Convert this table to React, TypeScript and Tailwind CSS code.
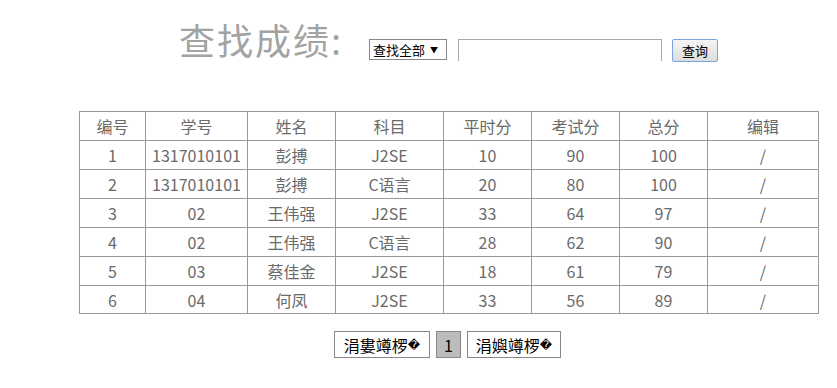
import React from "react";

const rows = [
  ["1", "1317010101", "彭搏", "J2SE", "10", "90", "100"],
  ["2", "1317010101", "彭搏", "C语言", "20", "80", "100"],
  ["3", "02", "王伟强", "J2SE", "33", "64", "97"],
  ["4", "02", "王伟强", "C语言", "28", "62", "90"],
  ["5", "03", "蔡佳金", "J2SE", "18", "61", "79"],
  ["6", "04", "何凤", "J2SE", "33", "56", "89"],
];

const widths = [66, 102, 88, 108, 88, 88, 88, 111];
const heads = ["编号", "学号", "姓名", "科目", "平时分", "考试分", "总分", "编辑"];

export default function App() {
  const font = { fontFamily: '"Noto Sans CJK SC", "Noto Sans", sans-serif' };
  return (
    <div className="w-[837px] h-[388px] bg-white overflow-hidden" style={font}>
      <div className="flex items-start pl-[179px] pt-[17px] h-[111px]">
        <div className="text-[36px] leading-[44px] text-[#a3a3a3] tracking-[2px]">查找成绩:</div>
        <div className="ml-[26px] mt-[22px] h-[21px] w-[78px] border border-[#888] flex items-center pl-[3px] text-[13px] text-black bg-white">
          <span className="leading-none">查找全部</span>
          <span className="ml-[5px] text-[8px] leading-none">▼</span>
        </div>
        <div className="ml-[11px] mt-[22px] h-[22px] w-[204px] border border-b-0 border-[#a9a9a9]" />
        <div className="ml-[10px] mt-[22px] h-[23px] w-[46px] border border-[#7aa3e0] rounded-[2px] bg-gradient-to-b from-[#f5f5f5] to-[#dcdcdc] flex items-center justify-center text-[13px] text-black">
          查询
        </div>
      </div>
      <table className="ml-[79px] border-collapse text-[16px] text-[#6a6a6a]">
        <thead>
          <tr className="h-[29px]">
            {heads.map((h, i) => (
              <th key={i} style={{ width: widths[i] }} className="border border-[#999] font-normal p-0 leading-none text-center">
                {h}
              </th>
            ))}
          </tr>
        </thead>
        <tbody>
          {rows.map((r, ri) => (
            <tr key={ri} className={ri === rows.length - 1 ? "h-[28px]" : "h-[29px]"}>
              {r.map((c, ci) => (
                <td key={ci} className="border border-[#999] p-0 leading-none text-center">
                  {c}
                </td>
              ))}
              <td className="border border-[#999] p-0 leading-none text-center">/</td>
            </tr>
          ))}
        </tbody>
      </table>
      <div className="flex ml-[334px] mt-[17px] gap-[6px] text-[16px] text-black">
        <div className="h-[27px] w-[96px] border border-[#888] flex items-center justify-center leading-none">
          涓婁竴椤<span style={{ fontFamily: '"DejaVu Sans", sans-serif' }} className="text-[12px]">�</span>
        </div>
        <div className="h-[27px] w-[25px] border border-[#888] bg-[#bcbcbc] flex items-center justify-center leading-none">
          1
        </div>
        <div className="h-[27px] w-[94px] border border-[#888] flex items-center justify-center leading-none">
          涓嬩竴椤<span style={{ fontFamily: '"DejaVu Sans", sans-serif' }} className="text-[12px]">�</span>
        </div>
      </div>
    </div>
  );
}
